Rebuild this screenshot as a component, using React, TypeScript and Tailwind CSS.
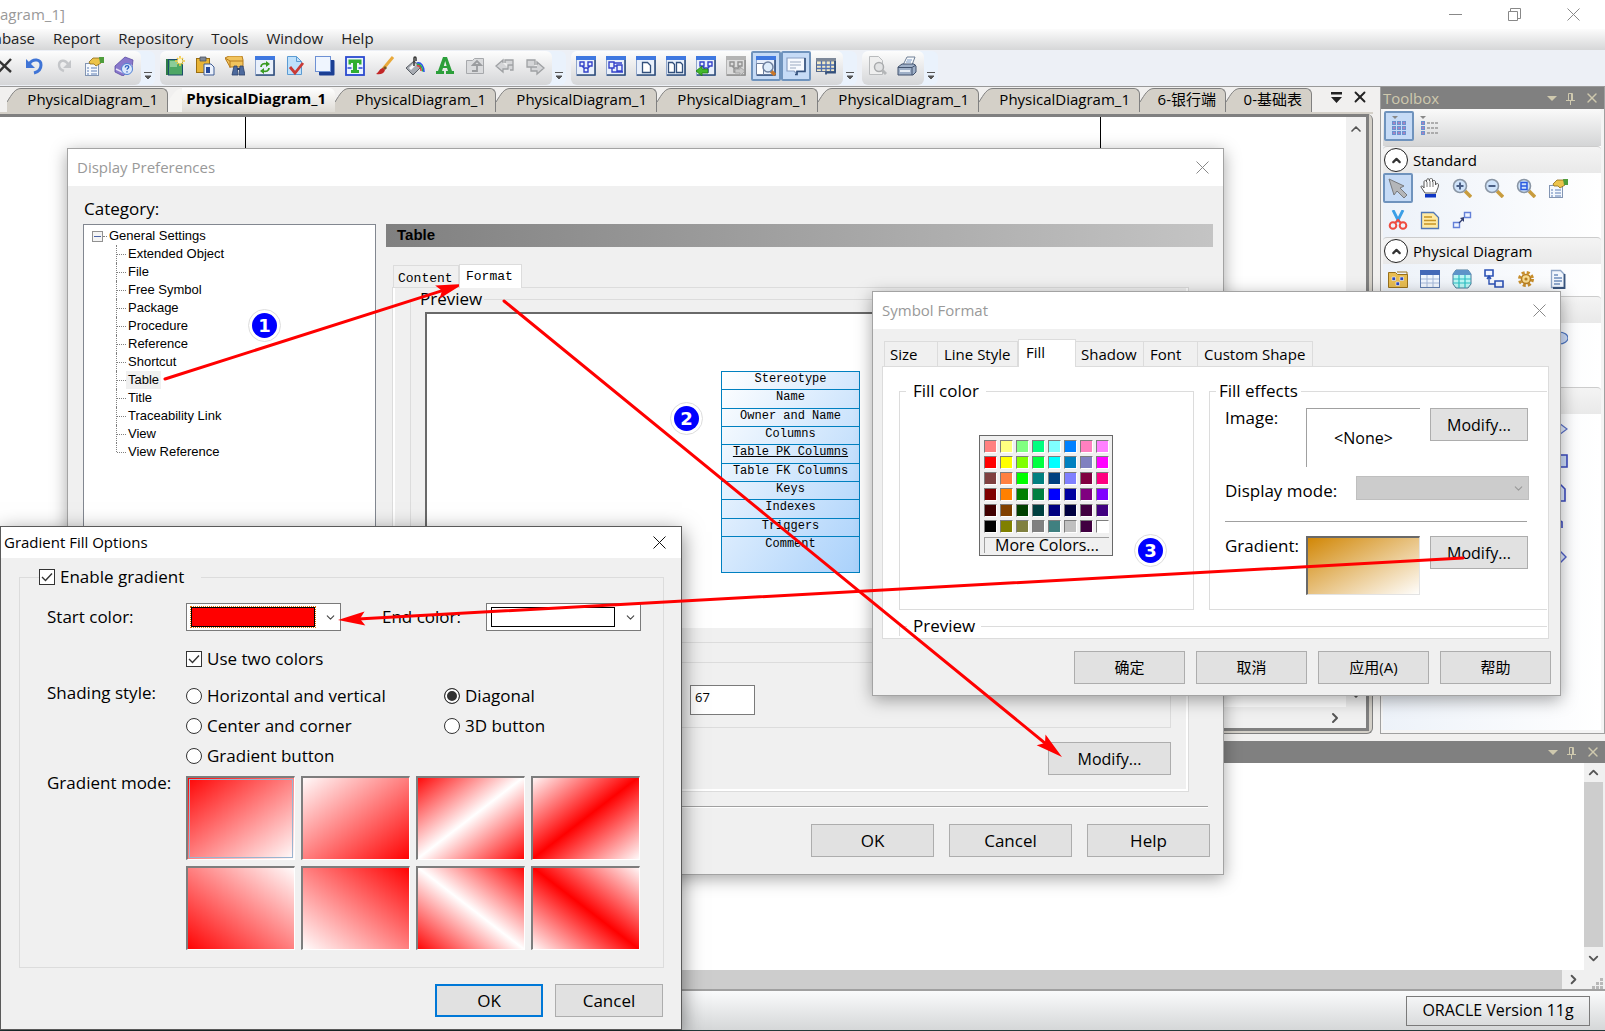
import type { ReactNode } from "react";
import clsx from "clsx";
import { ChevronDown, ChevronRight, ChevronUp, X } from "lucide-react";

const UI = "font-['Open_Sans','Noto_Sans_CJK_SC',sans-serif]";

/* ---------- icons ---------- */

function Svg({ children, size = 20 }: { children: ReactNode; size?: number }) {
  return (
    <svg width={size} height={size} viewBox="0 0 20 20" fill="none" aria-hidden="true" className="shrink-0">
      {children}
    </svg>
  );
}

function WindowFrame({ gray = false }: { gray?: boolean }) {
  return (
    <>
      <rect x="0.5" y="0.5" width="19" height="19" fill={gray ? "#dcdcdc" : "#e9f0fb"} stroke={gray ? "#b4b4b4" : "#8fa5cb"} />
      <path d="M19 4v15.500M1 19h18" stroke={gray ? "#8f8f8f" : "#33507c"} strokeWidth="1.600" />
      <rect x="0" y="0" width="20" height="4" fill={gray ? "#b4b4b4" : "#3f78e0"} />
    </>
  );
}

function Nodes({ color = "#3341c9" }: { color?: string }) {
  return <path d="M4 6h4v4H4zM12 6h4v4h-4zM8 12h4v4H8zM6 10l3 3M14 10l-3 3" stroke={color} strokeWidth="1.4" />;
}

const icons: Record<string, ReactNode> = {
  remove: <path d="M3 3l14 13M17 3L4 17" stroke="#333" strokeWidth="2.4" />,
  undo: (
    <>
      <path d="M5 8c4-6 12-5 12 1 0 4-3 7-7 8" stroke="#3f74d6" strokeWidth="3" />
      <path d="M2 3v9h9z" fill="#3f74d6" />
    </>
  ),
  redo: (
    <>
      <path d="M14 8C11 3 5 4 5 9c0 3 2 5 5 6" stroke="#c4c6c9" strokeWidth="2.4" />
      <path d="M17 4v8H9z" fill="#c4c6c9" />
    </>
  ),
  props: (
    <>
      <rect x="1.5" y="7.5" width="13" height="12" fill="#f4f8fd" stroke="#8295b3" />
      <path d="M3 12h2M7 12h6M3 15h2M7 15h6M3 18h2M7 18h6" stroke="#5f7fb5" />
      <path d="M5 6l4-4h7l1 5-5 3-2-2H6z" fill="#ecc34a" stroke="#8d6a17" strokeWidth="0.8" />
      <path d="M15 1h5v6h-4z" fill="#4f9d3c" />
    </>
  ),
  help: (
    <>
      <path d="M1 10L11 1l8 3-1 8-9 8-8-4z" fill="#8878cc" stroke="#5c4da3" strokeWidth="0.8" />
      <path d="M2 13l8 4 8-8" stroke="#e5e0f7" strokeWidth="1.4" />
      <circle cx="13" cy="13" r="5.5" fill="#dbe8fc" stroke="#4d7fd4" />
      <path d="M11.3 11.5c0-2.6 3.6-2.3 3.4-.2-.2 1-1.600 1.200-1.600 2.500M13 15.300v1.200" stroke="#2b5fc0" strokeWidth="1.3" />
    </>
  ),
  newModel: (
    <>
      <path d="M1 3h3v16H1z" fill="#2f7c46" />
      <rect x="3.500" y="3.500" width="14" height="15.500" fill="#4ea765" stroke="#1c4d6b" />
      <path d="M5 5h7v6H5z" fill="#a5dcae" opacity="0.7" />
      <path d="M15 0v10M10 5h10M12 2l6 6M18 2l-6 6" stroke="#f5c93c" strokeWidth="1.600" />
      <circle cx="15" cy="5" r="2.500" fill="#fff6c4" />
    </>
  ),
  paste: (
    <>
      <rect x="1.500" y="2.500" width="13" height="14" fill="#e8b437" stroke="#9b6e11" />
      <path d="M5 1h6v4H5z" fill="#7e8796" stroke="#4c5462" strokeWidth="0.8" />
      <path d="M9 8h7l3 3v8H9z" fill="#eaf0fb" stroke="#3f5c94" />
      <path d="M11 17v-6h4v6h4z" fill="#24489a" />
    </>
  ),
  find: (
    <>
      <path d="M0 2l4-2h13l1 4v7H5z" fill="#f1c35c" stroke="#b57a1d" />
      <path d="M0 2l5 3v7M5 5h13" stroke="#b57a1d" />
      <path d="M7 19l2-9h3l1 9zM14 19l1-9h3l2 9z" fill="#4d6a9d" stroke="#2b4069" strokeWidth="0.8" />
      <path d="M12 13h3" stroke="#2b4069" strokeWidth="2" />
    </>
  ),
  refresh: (
    <>
      <WindowFrame />
      <path d="M6 11c0-3 3-4 6-3M14 12c0 3-3 4-6 3" stroke="#3a9b22" strokeWidth="1.800" />
      <path d="M11 5l4 3-4 3zM9 12l-4 3 4 3z" fill="#3a9b22" />
    </>
  ),
  check: (
    <>
      <path d="M2.500.5h9l5 5v13h-14z" fill="#bfe0fa" stroke="#5b9bd3" />
      <path d="M11.500.5v5h5" stroke="#5b9bd3" />
      <path d="M5 11l5 6 8-10" stroke="#c93a35" strokeWidth="2.800" />
    </>
  ),
  shadow: (
    <>
      <rect x="4" y="4" width="15.500" height="15.500" rx="1" fill="#1b3f94" />
      <rect x="0.500" y="0.500" width="15" height="15" fill="#eff5fe" stroke="#6d90d4" />
    </>
  ),
  textBox: (
    <>
      <rect x="1" y="1" width="18" height="18" fill="#eaf3ff" stroke="#2a49cf" strokeWidth="1.800" />
      <path d="M3.500 3.500h13v5h-2.500V7h-2v7h2v3H6v-3h2V7H6v1.500H3.500z" fill="#2fae31" />
      <path d="M2.500 12h4M17.500 12h-4" stroke="#2a49cf" strokeWidth="1.400" />
    </>
  ),
  brush: (
    <>
      <path d="M18 1L8 13" stroke="#e9a93a" strokeWidth="3" />
      <path d="M9 11l2 2" stroke="#7a5622" strokeWidth="3" />
      <path d="M8 12c-3 0-4 4-7 6 4 1 8 0 9-4z" fill="#c22626" />
    </>
  ),
  bucket: (
    <>
      <path d="M1 12l8-7 7 6-8 8z" fill="#a7abb2" stroke="#5a5f66" />
      <path d="M4 12l5-5 2 2-5 5z" fill="#f6f7f8" />
      <path d="M9 10V2c0-1.500 2-1.500 2 0v3" stroke="#333" strokeWidth="1.500" />
      <path d="M12 7c4-1 7 3 7 9" stroke="#2b4ff0" strokeWidth="1.600" />
      <path d="M12 8.500c3-1 5.500 2 5.500 7" stroke="#22b04a" strokeWidth="1.400" />
      <path d="M12 10c2-1 4 1.500 4 5" stroke="#e23b3b" strokeWidth="1.400" />
    </>
  ),
  letterA: (
    <path d="M8 1h4l5 14h2v3h-8v-3h2l-1-3H8l-1 3h2v3H1v-3h2zM8.800 10h2.800L10.200 5z" fill="#2c9f3a" />
  ),
  folderUp: (
    <>
      <path d="M1.500 4.500h6l2-2h9v15h-17z" fill="#dadbdd" stroke="#a7a9ac" />
      <path d="M7 15h5V8M8 9l4-4 4 4z" stroke="#9a9c9f" strokeWidth="1.800" />
    </>
  ),
  prev: (
    <path d="M8 7V4l-7 6 7 6v-3h5V9h5v5h-3M10 7V4h8v5" fill="#d5d6d8" stroke="#9fa1a4" strokeWidth="1.300" />
  ),
  next: (
    <path d="M12 9V6l7 6-7 6v-3H6v-4h6M8 11H2V4h8v5" fill="#d5d6d8" stroke="#9fa1a4" strokeWidth="1.300" />
  ),
  winTree: (
    <>
      <WindowFrame />
      <Nodes />
    </>
  ),
  winLinks: (
    <>
      <WindowFrame />
      <path d="M3 6h5v6H3zM11 9h5v6h-5zM8 7h8M6 12v4h11M8 10h3" stroke="#3341c9" strokeWidth="1.400" />
    </>
  ),
  winPage: (
    <>
      <WindowFrame />
      <path d="M6.500 6.500h5l3 3v7h-8z" fill="#fff" stroke="#33507c" strokeWidth="1.300" />
    </>
  ),
  winPages: (
    <>
      <WindowFrame />
      <path d="M2.500 6.500h4l2 2v8h-6zM10.500 6.500h4l2 2v8h-6z" fill="#fff" stroke="#33507c" strokeWidth="1.300" />
    </>
  ),
  winBack: (
    <>
      <WindowFrame />
      <Nodes />
      <path d="M0 15l6-5v3h6v4H6v3z" fill="#43b82a" stroke="#1f7a12" strokeWidth="0.800" />
    </>
  ),
  winForward: (
    <>
      <WindowFrame gray />
      <Nodes color="#909090" />
      <path d="M19 15l-5-4v2H9v4h5v3z" fill="#c9c9c9" stroke="#9a9a9a" strokeWidth="0.800" />
    </>
  ),
  winZoom: (
    <>
      <WindowFrame />
      <path d="M0.500 7.500h7v11h-7z" fill="#fff" stroke="#6d7f9e" />
      <path d="M15 15l4 4" stroke="#c9772a" strokeWidth="3.400" />
      <circle cx="12" cy="11" r="5" fill="#dcebfb" fillOpacity="0.900" stroke="#6d7f9e" strokeWidth="1.500" />
    </>
  ),
  note: (
    <>
      <path d="M1 2h18v13h-8v3l-3-3H1z" fill="#f7faff" stroke="#8aa0c4" strokeWidth="1.200" />
      <path d="M4 6h11M4 9h11M4 12h6" stroke="#9aa9c0" />
      <path d="M19 2v13.500h-8v3H9" stroke="#33507c" strokeWidth="1.600" />
    </>
  ),
  gridView: (
    <>
      <rect x="0.500" y="2.500" width="19" height="13" fill="#f3e9c4" stroke="#56698c" />
      <rect x="0" y="2" width="20" height="3.500" fill="#7d8899" />
      <path d="M1 9h18M1 12.500h18M5.500 5v10M10 5v10M14.500 5v10" stroke="#4f6fae" strokeWidth="1.300" />
      <path d="M19 5v11.500H10v2" stroke="#33507c" strokeWidth="1.800" />
    </>
  ),
  preview: (
    <>
      <path d="M2.500.5h9l4 4v14h-13z" fill="#efefef" stroke="#b9bbbd" />
      <circle cx="12" cy="11" r="4.500" fill="#e2e3e4" stroke="#a9abad" strokeWidth="1.500" />
      <path d="M15 14l4 4" stroke="#b4b6b8" strokeWidth="3" />
    </>
  ),
  printer: (
    <>
      <path d="M6 9l4-8h8l-3 8z" fill="#f8fafc" stroke="#6f7f95" />
      <path d="M10 4h5M9 6h5" stroke="#7d9ac4" />
      <path d="M1 11l4-3h12l2 2v6l-3 3H1z" fill="#9fb0c8" stroke="#42536e" />
      <path d="M1 11.500h14l4-2.500M15 12v7" stroke="#42536e" />
      <path d="M3 15h10" stroke="#e7edf5" strokeWidth="2" />
    </>
  ),
  pointer: (
    <path d="M1 1l15 7-4 2 7 7-3 3-7-7-3 4z" fill="#b4b6b9" stroke="#77797d" />
  ),
  hand: (
    <>
      <path d="M5 15L1 9c0-2 2-1 3 1V4c0-2 2.500-2 2.500 0V3c0-3 3-3 3 0V2c0-2.500 3-2.500 3 0v2c0-2 3-2 3 0v3c1-2 3-2 3 0 0 3-2 5-2.500 8z" fill="#fff" stroke="#555" />
      <path d="M7 4v5M10 3v6M13 4v5" stroke="#777" />
      <path d="M5 16h11v3.500H5z" fill="#0d35c4" />
    </>
  ),
  zoomIn: (
    <>
      <path d="M13 13l6 6" stroke="#c89c3e" strokeWidth="3.600" />
      <circle cx="8" cy="8" r="6.500" fill="#cfe3fa" stroke="#8a96a5" strokeWidth="1.600" />
      <path d="M8 4.500v7M4.500 8h7" stroke="#4a5f85" strokeWidth="2" />
    </>
  ),
  zoomOut: (
    <>
      <path d="M13 13l6 6" stroke="#c89c3e" strokeWidth="3.600" />
      <circle cx="8" cy="8" r="6.500" fill="#cfe3fa" stroke="#8a96a5" strokeWidth="1.600" />
      <path d="M4.500 8h7" stroke="#4a5f85" strokeWidth="2" />
    </>
  ),
  zoomFit: (
    <>
      <path d="M13 13l6 6" stroke="#c89c3e" strokeWidth="3.600" />
      <circle cx="8" cy="8" r="6.500" fill="#cfe3fa" stroke="#8a96a5" strokeWidth="1.600" />
      <path d="M5 4.500h6v7H5zM5 8h6" stroke="#2a5ae0" strokeWidth="1.500" />
    </>
  ),
  cut: (
    <>
      <path d="M5 0l6 12M15 0L9 12" stroke="#3b9fe6" strokeWidth="2.800" />
      <circle cx="5" cy="15.500" r="3.300" stroke="#ef4b3f" strokeWidth="2" />
      <circle cx="15" cy="15.500" r="3.300" stroke="#ef4b3f" strokeWidth="2" />
      <path d="M7 13l3-3 3 3" stroke="#ef4b3f" strokeWidth="2" />
    </>
  ),
  memo: (
    <>
      <path d="M1.500 2.500h12l5 5v11h-17z" fill="#ffeaa3" stroke="#5177b5" strokeWidth="1.300" />
      <path d="M4 7h8M4 10.500h12M4 14h12" stroke="#c69425" strokeWidth="1.600" />
    </>
  ),
  link: (
    <>
      <path d="M12.500 2.500h6v5h-6zM1.500 12.500h6v5h-6z" fill="#eff4ff" stroke="#6380d8" strokeWidth="1.400" />
      <path d="M7 13l4-4" stroke="#333f70" strokeWidth="1.300" />
      <path d="M12 7v5L8 8z" fill="#333f70" />
    </>
  ),
  package: (
    <>
      <path d="M.5 3.500h7l2 2h10v13H.5z" fill="#e8bd52" stroke="#99701b" />
      <path d="M9 3h10v3" stroke="#99701b" />
      <path d="M4 8h3.500v3.500H4zM12 8h3.500v3.500H12zM8 13h3.500v3.500H8z" fill="#2c49c0" stroke="#fff" strokeWidth="0.600" />
    </>
  ),
  table: (
    <>
      <rect x="0.500" y="1.500" width="19" height="17" fill="#f2f7ff" stroke="#6380b3" />
      <path d="M0 1h20v5H0z" fill="#4469b8" />
      <path d="M1 10h18M1 14h18M7 6v12M13 6v12" stroke="#a5b8da" />
    </>
  ),
  view: (
    <>
      <path d="M4 1h12l3 4v10l-3 4H4l-3-4V5z" fill="#bdf7f5" stroke="#4c7a99" />
      <path d="M1 5l3-4h12l3 4v1H1z" fill="#5d94c9" />
      <path d="M1 10h18M1 14h18M7 6v13M13 6v13" stroke="#2cc0c5" strokeWidth="1.200" />
    </>
  ),
  reference: (
    <>
      <path d="M1 1h8v6H1zM11 12h8v6h-8z" fill="#f2f6ff" stroke="#2c52b5" strokeWidth="1.600" />
      <path d="M5 7v8h6M3 10l2-3 2 3" stroke="#2c52b5" strokeWidth="1.400" />
    </>
  ),
  procedure: (
    <>
      <circle cx="10" cy="10" r="6.500" stroke="#c98f2c" strokeWidth="3" strokeDasharray="3 2.100" />
      <circle cx="10" cy="10" r="4.500" fill="#f7dc93" stroke="#b97f21" strokeWidth="1.600" />
      <circle cx="10" cy="10" r="1.600" fill="#b97f21" />
    </>
  ),
  file: (
    <>
      <path d="M3.500 1.500h9l4 4v13h-13z" fill="#f1f6fd" stroke="#8ea5c6" strokeWidth="1.300" />
      <path d="M16.500 5v14H5" stroke="#38547d" strokeWidth="1.800" />
      <path d="M6 6h4M6 9h8M6 12h8M6 15h6" stroke="#6f8fbc" strokeWidth="1.300" />
    </>
  ),
  ellipse: <ellipse cx="11" cy="10" rx="9" ry="6" fill="#cddcf8" stroke="#4f78c4" strokeWidth="1.200" />,
  diamond: <path d="M11 4l8 6-8 6-8-6z" fill="#dfe8fb" stroke="#5a70c8" strokeWidth="1.200" />,
  square: <path d="M2 4h17v12H2z" fill="#cddcf8" stroke="#3b4bc0" strokeWidth="1.600" />,
  page: <path d="M4 2h9l4 4v12H4z" fill="#dfe8fb" stroke="#3b4bc0" strokeWidth="1.600" />,
  arc: <path d="M5 16c0-8 5-12 9-9v6" stroke="#3b4bc0" strokeWidth="1.600" />,
  pentagon: <path d="M3 4h9l6 6-6 6H3z" fill="#dfe8fb" stroke="#4f5fc8" strokeWidth="1.400" />,
};

function Icon({ name }: { name: string }) {
  return <Svg>{icons[name]}</Svg>;
}

/* ---------- main frame ---------- */

const toolGroups = [
  ["remove", "undo", "redo", "props", "help"],
  ["newModel", "paste", "find", "refresh", "check", "shadow", "textBox", "brush", "bucket", "letterA", "folderUp", "prev", "next"],
  ["winTree", "winLinks", "winPage", "winPages", "winBack", "winForward", "winZoom", "note", "gridView"],
  ["preview", "printer"],
];
const pressed = ["winZoom", "note", "pointer"];

function IconButton({ name, className }: { name: string; className?: string }) {
  return (
    <button
      type="button"
      aria-label={name}
      className={clsx(
        "flex items-center justify-center",
        pressed.includes(name) && "rounded-xs border-2 border-[#6f93bd] bg-[#c6dbf6]",
        className
      )}
    >
      <Icon name={name} />
    </button>
  );
}

function TitleBar() {
  return (
    <header className="flex h-[29px] shrink-0 items-center justify-between bg-white text-[#999]">
      <div className="text-[15px] whitespace-nowrap">agram_1]</div>
      <div className="flex items-center gap-[46px] pr-[25px]">
        <button type="button" aria-label="Minimize">
          <svg width="13" height="13" viewBox="0 0 13 13"><path d="M0 6.500h13" stroke="#888" /></svg>
        </button>
        <button type="button" aria-label="Restore">
          <svg width="13" height="13" viewBox="0 0 13 13" fill="none" stroke="#888"><path d="M.5 3.500h9v9h-9zM2.500 3V.5h10v10H10" /></svg>
        </button>
        <button type="button" aria-label="Close">
          <svg width="13" height="13" viewBox="0 0 13 13" stroke="#888"><path d="M.5.5l12 12M12.500.5l-12 12" /></svg>
        </button>
      </div>
    </header>
  );
}

function MenuBar() {
  return (
    <nav className="flex h-[21px] shrink-0 items-start gap-[18px] bg-linear-to-b from-[#fcfcfc] to-[#d6d7d8] text-[15px] leading-[19px] text-[#222]">
      <button type="button" className="flex w-[35px] justify-end overflow-hidden">abase</button>
      {["Report", "Repository", "Tools", "Window", "Help"].map((item) => (
        <button key={item} type="button">{item}</button>
      ))}
    </nav>
  );
}

function ToolBar() {
  return (
    <div className="flex h-9 shrink-0 gap-[5px] overflow-hidden bg-[#edf0f6] py-px">
      {toolGroups.map((group, i) => (
        <div key={group[0]} className={clsx("flex rounded-md bg-[#eaf2fc]", i === 0 && "-ml-[11px]")}>
          <div className="flex rounded-md bg-linear-to-b from-[#fdfdfd] to-[#d5d6d8] pr-[2px] pb-1">
            {group.map((name) => (
              <IconButton key={name} name={name} className="w-[30px] pr-px" />
            ))}
          </div>
          <button type="button" aria-label="Toolbar options" className="flex w-[14px] items-end justify-center pb-[5px]">
            <svg width="8" height="8" viewBox="0 0 8 8"><path d="M0 .5h8M1 4h6L4 7z" stroke="#555" fill="#555" /></svg>
          </button>
        </div>
      ))}
    </div>
  );
}

const docTabs = [
  { id: 1, label: "PhysicalDiagram_1", width: "w-[161px]" },
  { id: 2, label: "PhysicalDiagram_1", width: "w-[167px]", active: true },
  { id: 3, label: "PhysicalDiagram_1", width: "w-[161px]" },
  { id: 4, label: "PhysicalDiagram_1", width: "w-[161px]" },
  { id: 5, label: "PhysicalDiagram_1", width: "w-[161px]" },
  { id: 6, label: "PhysicalDiagram_1", width: "w-[161px]" },
  { id: 7, label: "PhysicalDiagram_1", width: "w-[161px]" },
  { id: 8, label: "6-银行端", width: "w-[86px]" },
  { id: 9, label: "0-基础表", width: "w-[86px]" },
];

function DocTabs() {
  return (
    <div className="flex h-[27px] shrink-0 items-start border-b-2 border-[#d4d0c8] bg-[#f1f0ef] pl-[7px]">
      {docTabs.map((tab) => (
        <button
          key={tab.id}
          type="button"
          className={clsx("mt-px flex h-6 shrink-0 text-[15px] leading-5", tab.width)}
        >
          <svg width="14" height="24" viewBox="0 0 14 24" className="shrink-0">
            <path d="M0 24V14C5 6 8 .5 14 .5V24z" fill={tab.active ? "#f6f5f3" : "#d4d0c8"} />
            {!tab.active && <path d="M0 14C5 6 8 .5 14 .5" stroke="#808080" fill="none" />}
          </svg>
          <span
            className={clsx(
              "flex h-full flex-1 justify-end rounded-tr-md pr-[9px] whitespace-nowrap",
              tab.active
                ? "bg-linear-to-b from-white to-[#dedbd5] font-bold"
                : "border-t border-r border-[#808080] bg-[#d4d0c8]"
            )}
          >
            {tab.label}
          </span>
        </button>
      ))}
      <div className="ml-auto flex items-center gap-[9px] pt-px pr-1 text-[#222]">
        <button type="button" aria-label="Tab list">
          <svg width="11" height="11" viewBox="0 0 11 11"><path d="M0 0h11v2.500H0zM0 5h11L5.500 11z" fill="#222" /></svg>
        </button>
        <button type="button" aria-label="Close tab"><X size={18} strokeWidth={2.500} /></button>
      </div>
    </div>
  );
}

function PaneHeader({ title }: { title?: string }) {
  return (
    <div className="flex h-[22px] shrink-0 items-center justify-between bg-[#808080] pr-1 pl-[2px] text-[15px] leading-5 text-[#cfc9ae]">
      <span>{title}</span>
      <div className="flex items-center gap-[9px]">
        <button type="button" aria-label="Pane menu">
          <svg width="10" height="5" viewBox="0 0 10 5"><path d="M0 0h10L5 5z" fill="#cfc9ae" /></svg>
        </button>
        <button type="button" aria-label="Pin pane">
          <svg width="9" height="13" viewBox="0 0 9 13" fill="none" stroke="#cfc9ae"><path d="M2.500 8V1.500h4V8M5.500 2v6M0 8.500h9M4.500 9v4" /></svg>
        </button>
        <button type="button" aria-label="Close pane"><X size={16} /></button>
      </div>
    </div>
  );
}

function ToolboxSection({ title, children }: { title: string; children: ReactNode }) {
  return (
    <section>
      <h2 className="flex h-[27px] items-center gap-[5px] rounded-t-sm border-t border-[#ccc] bg-linear-to-b from-[#f4f4f4] to-[#e9e9e9] pl-px text-[15px]">
        <span className="flex size-6 items-center justify-center rounded-full border border-[#222] bg-white">
          <ChevronUp size={13} strokeWidth={4} color="#333" />
        </span>
        {title}
      </h2>
      <div className="grid auto-rows-[32px] grid-cols-[repeat(6,32px)]">{children}</div>
    </section>
  );
}

function Toolbox() {
  return (
    <aside className="flex w-[225px] shrink-0 flex-col border-r border-b border-l border-[#a0a0a0] bg-[#f4f4f4]">
      <PaneHeader title="Toolbox" />
      <div className="mr-[3px] mb-[3px] ml-[2px] flex flex-1 flex-col bg-linear-to-r from-[#edf2f9] to-white">
        <div className="flex h-[37px] bg-linear-to-b from-[#fafafa] to-[#d4d5d6] py-[2px] pl-px">
          <button type="button" aria-label="Icon view" className="flex h-[30px] w-[30px] items-center justify-center rounded-xs border-2 border-[#6f93bd] bg-[#c6dbf6]">
            <Svg>
              <path d="M3 0h6L6 3z" fill="#888" />
              <path d="M3 5h4v4H3zM8 5h4v4H8zM13 5h4v4h-4zM3 10h4v4H3zM8 10h4v4H8zM13 10h4v4h-4zM3 15h4v4H3zM8 15h4v4H8zM13 15h4v4h-4z" fill="#6a92d0" />
              <path d="M4 6h2v2H4zM9 6h2v2H9zM14 6h2v2h-2zM4 11h2v2H4zM9 11h2v2H9zM14 11h2v2h-2zM4 16h2v2H4zM9 16h2v2H9zM14 16h2v2h-2z" fill="#a884bd" />
            </Svg>
          </button>
          <button type="button" aria-label="List view" className="flex h-[30px] w-[30px] items-center justify-center">
            <Svg>
              <path d="M1 0h6L4 3z" fill="#888" />
              <path d="M2 5h4v4H2zM2 10h4v4H2zM2 15h4v4H2z" fill="#6a92d0" />
              <path d="M3 6h2v2H3zM3 11h2v2H3zM3 16h2v2H3z" fill="#a884bd" />
              <path d="M8 7h11M8 12h11M8 17h11" stroke="#999" strokeWidth="1.500" strokeDasharray="3 1" />
            </Svg>
          </button>
        </div>
        <ToolboxSection title="Standard">
          {["pointer", "hand", "zoomIn", "zoomOut", "zoomFit", "props", "cut", "memo", "link"].map((n) => (
            <IconButton key={n} name={n} className="h-[30px] w-[30px]" />
          ))}
        </ToolboxSection>
        <ToolboxSection title="Physical Diagram">
          {["package", "table", "view", "reference", "procedure", "file"].map((n) => (
            <IconButton key={n} name={n} className="h-[30px] w-[30px]" />
          ))}
        </ToolboxSection>
        <ToolboxSection title="">
          <IconButton name="ellipse" className="col-start-6 h-[30px] w-[30px]" />
          <span className="col-start-6" />
        </ToolboxSection>
        <ToolboxSection title="">
          {["diamond", "square", "page", "arc", "pentagon"].map((n) => (
            <IconButton key={n} name={n} className="col-start-6 h-[30px] w-[30px]" />
          ))}
        </ToolboxSection>
      </div>
    </aside>
  );
}

function Workspace() {
  return (
    <div className="flex min-h-0 flex-1 border-t border-[#999] bg-[#f1f0ef] pb-[7px]">
      <main className="mr-[7px] flex min-w-0 flex-1 flex-col">
        <DocTabs />
        <div className="flex flex-1 rounded-r-md border-r border-b border-[#808080] bg-[#d4d0c8] pr-[3px] pb-[2px]">
          <div className="flex flex-1 flex-col border-t-3 border-r-3 border-b-3 border-[#808080] bg-white">
            <div className="flex flex-1">
              <div className="flex flex-1 items-start pl-[245px]">
                <div className="h-24 w-[856px] border-x border-black" />
              </div>
              <div className="flex w-5 flex-col items-center justify-between bg-[#f0f0f0] py-1">
                <ChevronUp size={16} strokeWidth={2.500} color="#555" />
                <ChevronDown size={16} strokeWidth={2.500} color="#555" />
              </div>
            </div>
            <div className="flex h-[21px] items-center justify-end bg-[#f0f0f0] pr-[23px]">
              <ChevronRight size={16} strokeWidth={3} color="#555" />
            </div>
          </div>
        </div>
      </main>
      <Toolbox />
    </div>
  );
}

function OutputPane() {
  return (
    <section className="shrink-0 border-b-2 border-[#a0a0a0] bg-[#f0f0f0]">
      <PaneHeader />
      <div className="flex h-[207px] pr-[2px]">
        <div className="flex-1 bg-white" />
        <div className="flex w-[19px] flex-col items-center">
          <ChevronUp size={15} strokeWidth={3} color="#555" className="my-[2px]" />
          <div className="w-full flex-1 bg-[#cdcdcd]" />
          <ChevronDown size={15} strokeWidth={3} color="#555" className="my-1" />
        </div>
      </div>
      <div className="flex h-[19px] items-center">
        <div className="h-full flex-1 bg-[#cdcdcd]" />
        <ChevronRight size={15} strokeWidth={3} color="#555" className="mx-[4px]" />
        <svg width="20" height="19" viewBox="0 0 20 19" fill="#b8b8b8">
          <path d="M15 8h3v3h-3zM11 12h3v3h-3zM15 12h3v3h-3zM7 16h3v3H7zM11 16h3v3h-3zM15 16h3v3h-3z" />
        </svg>
      </div>
    </section>
  );
}

/* ---------- dialog parts ---------- */

function Dialog({
  title,
  active = false,
  className,
  titleClass,
  children,
}: {
  title: string;
  active?: boolean;
  className: string;
  titleClass: string;
  children: ReactNode;
}) {
  return (
    <section
      role="dialog"
      aria-label={title}
      className={clsx(
        "absolute border bg-[#f0f0f0] text-[17px] leading-5 text-black",
        active ? "border-[#5a5a5a] shadow-[0_6px_20px_rgba(0,0,0,0.5)]" : "border-[#a3a3a3] shadow-[0_4px_16px_rgba(0,0,0,0.35)]",
        className
      )}
    >
      <div className={clsx("flex items-center justify-between bg-white pb-px text-[15px]", !active && "text-[#999]", titleClass)}>
        <span>{title}</span>
        <button type="button" aria-label="Close">
          <svg width="13" height="13" viewBox="0 0 13 13" stroke={active ? "#111" : "#888"}>
            <path d="M.5.5l12 12M12.500.5l-12 12" />
          </svg>
        </button>
      </div>
      {children}
    </section>
  );
}

function PushButton({ children, className, primary }: { children: ReactNode; className: string; primary?: boolean }) {
  return (
    <button
      type="button"
      className={clsx("h-[33px] bg-[#e1e1e1]", primary ? "border-2 border-[#0078d7]" : "border border-[#adadad]", className)}
    >
      {children}
    </button>
  );
}

function Tab({ label, active, className }: { label: string; active?: boolean; className: string }) {
  return (
    <button
      type="button"
      role="tab"
      aria-selected={!!active}
      className={clsx("border-t border-r border-[#dcdcdc] text-left whitespace-nowrap", active && "relative z-10 -mb-px border-l bg-white", className)}
    >
      {label}
    </button>
  );
}

/* ---------- display preferences ---------- */

const categories = [
  "Extended Object", "File", "Free Symbol", "Package", "Procedure", "Reference",
  "Shortcut", "Table", "Title", "Traceability Link", "View", "View Reference",
];

const symbolRows = [
  "Stereotype", "Name", "Owner and Name", "Columns", "Table PK Columns",
  "Table FK Columns", "Keys", "Indexes", "Triggers", "Comment",
];

function CategoryTree() {
  return (
    <div className="w-[293px] shrink-0 border border-[#828790] bg-white pt-[2px] pl-2 font-['Liberation_Sans',sans-serif] text-[13px] leading-[18px]">
      <div className="flex items-center">
        <span className="flex size-[11px] items-center justify-center border border-[#919191] bg-[#f4f4f4]">
          <span className="h-px w-[7px] bg-[#4b63a7]" />
        </span>
        <span className="mr-[2px] w-1 border-t border-dotted border-[#808080]" />
        General Settings
      </div>
      <ul className="ml-6">
        {categories.map((c, i) => (
          <li key={c} className="flex items-center">
            <span className={clsx("self-start border-l border-dotted border-[#808080]", i === categories.length - 1 ? "h-[9px]" : "h-[18px]")} />
            <span className="w-[9px] border-t border-dotted border-[#808080]" />
            <span className={clsx("px-[2px]", c === "Table" && "bg-[#f0f0f0]")}>{c}</span>
          </li>
        ))}
      </ul>
    </div>
  );
}

function DisplayPreferences() {
  return (
    <Dialog title="Display Preferences" className="top-[148px] left-[67px] w-[1157px]" titleClass="h-[37px] pr-[14px] pl-[9px]">
      <div className="pt-[13px] pr-[10px] pb-[17px] pl-[15px]">
        <div className="h-[25px] pl-px">Category:</div>
        <div className="flex gap-[10px]">
          <CategoryTree />
          <div className="min-w-0 flex-1">
            <div className="h-[23px] bg-linear-to-r/srgb from-[#808080] to-[#c4c4c4] pl-[11px] font-['Liberation_Sans',sans-serif] text-[15px] leading-[22px] font-bold">
              Table
            </div>
            <div role="tablist" className="mt-[17px] ml-[7px] flex items-end font-['Liberation_Mono',monospace] text-[13px]">
              <Tab label="Content" className="h-[22px] w-[66px] border-l pt-[3px] pl-1" />
              <Tab label="Format" active className="h-6 w-[63px] pl-[6px] leading-[22px]" />
            </div>
            <div className="mr-6 ml-[6px] border border-[#dcdcdc]">
              <div className="border-2 border-t-0 border-white pr-[15px] pb-[14px] pl-[15px]">
                <fieldset className="border border-[#dcdcdc] px-[14px] pt-[2px] pb-[14px]">
                  <legend className="-ml-[7px] px-[2px] leading-[22px]">Preview</legend>
                  <div className="flex h-[316px] justify-center border-2 border-[#696969] border-r-white border-b-white bg-white pt-[57px]">
                    <div className="h-[202px] w-[139px] border border-[#0080c0] bg-linear-to-br/srgb from-white to-[#a9d1fb] font-['Liberation_Mono',monospace] text-[12px] leading-[14px]">
                      {symbolRows.map((row, i) => (
                        <div
                          key={row}
                          className={clsx(
                            "text-center",
                            i % 3 === 1 ? "h-[19px]" : "h-[18px]",
                            i < 9 && "border-b border-[#0080c0]",
                            row === "Table PK Columns" && "underline"
                          )}
                        >
                          {row}
                        </div>
                      ))}
                    </div>
                  </div>
                </fieldset>
                <fieldset className="mt-[19px] border border-[#dcdcdc] pt-[22px] pb-3 pl-[279px]">
                  <input
                    aria-label="Width"
                    defaultValue="67"
                    className="block h-[30px] w-[65px] border border-[#7a7a7a] bg-white px-1 pb-[7px] font-['Open_Sans',sans-serif] text-[13px]"
                  />
                </fieldset>
                <div className="mt-[14px] flex justify-end text-[16px]">
                  <PushButton className="w-[123px]">Modify...</PushButton>
                </div>
              </div>
            </div>
          </div>
        </div>
        <div className="mt-[14px] mr-[5px] h-[2px] border-b border-white bg-[#a0a0a0]" />
        <div className="mt-4 mr-[3px] flex justify-end gap-[15px]">
          <PushButton className="w-[123px]">OK</PushButton>
          <PushButton className="w-[123px]">Cancel</PushButton>
          <PushButton className="w-[123px]">Help</PushButton>
        </div>
      </div>
    </Dialog>
  );
}

/* ---------- symbol format ---------- */

const palette = [
  "bg-[#ff8080]", "bg-[#ffff80]", "bg-[#80ff80]", "bg-[#00ff80]", "bg-[#80ffff]", "bg-[#0080ff]", "bg-[#ff80c0]", "bg-[#ff80ff]",
  "bg-[#ff0000]", "bg-[#ffff00]", "bg-[#80ff00]", "bg-[#00ff40]", "bg-[#00ffff]", "bg-[#0080c0]", "bg-[#8080c0]", "bg-[#ff00ff]",
  "bg-[#804040]", "bg-[#ff8040]", "bg-[#00ff00]", "bg-[#008080]", "bg-[#004080]", "bg-[#8080ff]", "bg-[#800040]", "bg-[#ff0080]",
  "bg-[#800000]", "bg-[#ff8000]", "bg-[#008000]", "bg-[#008040]", "bg-[#0000ff]", "bg-[#0000a0]", "bg-[#800080]", "bg-[#8000ff]",
  "bg-[#400000]", "bg-[#804000]", "bg-[#004000]", "bg-[#004040]", "bg-[#000080]", "bg-[#000040]", "bg-[#400040]", "bg-[#400080]",
  "bg-[#000000]", "bg-[#808000]", "bg-[#808040]", "bg-[#808080]", "bg-[#408080]", "bg-[#c0c0c0]", "bg-[#400040]", "bg-[#ffffff]",
];

function ColorPalette() {
  return (
    <div className="w-[134px] border border-[#696969] bg-[#f0f0f0] pt-1 pr-[3px] pb-[2px] pl-1">
      <div className="grid grid-cols-[repeat(8,13px)] gap-[3px]">
        {palette.map((color, i) => (
          <button
            key={i}
            type="button"
            aria-label={`Color ${i + 1}`}
            className={clsx("size-[13px] border border-t-[#7d7d7d] border-r-white border-b-white border-l-[#7d7d7d]", color)}
          />
        ))}
      </div>
      <button type="button" className="mt-1 block h-4 w-[125px] border-t border-l border-[#a0a0a0] text-[16px] leading-[15px]">
        More Colors...
      </button>
    </div>
  );
}

function SymbolFormat() {
  return (
    <Dialog title="Symbol Format" className="top-[291px] left-[872px] w-[689px]" titleClass="h-[37px] pr-[14px] pl-[9px]">
      <div className="pt-[10px] pr-[11px] pb-[11px] pl-[9px]">
        <div role="tablist" className="ml-[2px] flex items-end text-[15px]">
          <Tab label="Size" className="h-[25px] w-[54px] border-l pl-[5px]" />
          <Tab label="Line Style" className="h-[25px] w-[80px] pl-[6px]" />
          <Tab label="Fill" active className="h-7 w-[58px] pb-1 pl-[7px]" />
          <Tab label="Shadow" className="h-[25px] w-[68px] pl-[5px]" />
          <Tab label="Font" className="h-[25px] w-[54px] pl-[6px]" />
          <Tab label="Custom Shape" className="h-[25px] w-[115px] pl-[6px]" />
        </div>
        <div className="border border-[#dcdcdc] bg-white pt-[14px] pr-px pb-[2px] pl-4">
          <div className="flex gap-[15px]">
            <fieldset className="w-[295px] border border-[#dcdcdc] pl-[79px]">
              <legend className="-ml-[73px] px-[7px]">Fill color</legend>
              <div className="pt-[34px]"><ColorPalette /></div>
            </fieldset>
            <fieldset className="flex-1 border border-r-0 border-[#dcdcdc] pt-[7px] pb-[14px] pl-[15px]">
              <legend className="-ml-[9px] px-[3px]">Fill effects</legend>
              <div className="flex items-start">
                <span className="w-[81px]">Image:</span>
                <span className="flex h-[59px] w-[114px] items-center justify-center border-t border-l border-[#a0a0a0] text-[16px]">&lt;None&gt;</span>
                <PushButton className="ml-[10px] w-[98px] text-[16px]">Modify...</PushButton>
              </div>
              <div className="mt-[9px] flex h-6 items-center">
                <label htmlFor="display-mode" className="w-[131px] pt-[5px]">Display mode:</label>
                <span className="relative">
                  <select id="display-mode" disabled className="block h-6 w-[173px] appearance-none border border-[#bfbfbf] bg-[#ccc] opacity-100" />
                  <ChevronDown size={13} strokeWidth={2} color="#999" className="absolute top-[6px] right-1" />
                </span>
              </div>
              <div className="mt-[21px] mr-5 border-t border-[#a0a0a0]" />
              <div className="mt-[14px] flex items-start">
                <span className="w-[81px]">Gradient:</span>
                <span className="h-[59px] w-[114px] border-t-2 border-r border-b border-l-2 border-t-[#696969] border-r-[#e3e3e3] border-b-[#e3e3e3] border-l-[#696969] bg-linear-to-br/srgb from-[#d08400] to-white bg-origin-border" />
                <PushButton className="ml-[10px] w-[98px] text-[16px]">Modify...</PushButton>
              </div>
            </fieldset>
          </div>
          <fieldset className="mt-[6px] h-5 border border-r-0 border-b-0 border-[#dcdcdc]">
            <legend className="ml-[7px] px-[6px]">Preview</legend>
          </fieldset>
        </div>
        <div className="mt-3 -mr-[2px] flex justify-end gap-[11px] text-[15px]">
          <PushButton className="w-[111px] pb-px">确定</PushButton>
          <PushButton className="w-[111px] pb-px">取消</PushButton>
          <PushButton className="w-[111px] pb-px">应用(A)</PushButton>
          <PushButton className="w-[111px] pb-px">帮助</PushButton>
        </div>
      </div>
    </Dialog>
  );
}

/* ---------- gradient fill options ---------- */

const gradientModes = [
  "bg-linear-to-br/srgb from-[#ff0000] to-white",
  "bg-linear-to-br/srgb from-white to-[#ff0000]",
  "bg-linear-to-br/srgb from-[#ff0000] via-white to-[#ff0000]",
  "bg-linear-to-br/srgb from-white via-[#ff0000] to-white",
  "bg-linear-to-tr/srgb from-[#ff0000] to-white",
  "bg-linear-to-tr/srgb from-white to-[#ff0000]",
  "bg-linear-to-tr/srgb from-[#ff0000] via-white to-[#ff0000]",
  "bg-linear-to-tr/srgb from-white via-[#ff0000] to-white",
];

function CheckBox({ label }: { label: string }) {
  return (
    <label className="flex items-center gap-[5px]">
      <span className="relative size-4">
        <input type="checkbox" defaultChecked className="block size-4 appearance-none border border-[#333] bg-white" />
        <svg width="16" height="16" viewBox="0 0 16 16" fill="none" className="pointer-events-none absolute inset-0">
          <path d="M3 8l3.500 3.500L13 4.500" stroke="#333" strokeWidth="1.400" />
        </svg>
      </span>
      {label}
    </label>
  );
}

function Radio({ label, checked }: { label: string; checked?: boolean }) {
  return (
    <label className="flex h-[30px] items-center gap-[5px]">
      <input
        type="radio"
        name="shading"
        defaultChecked={checked}
        className="size-4 appearance-none rounded-full border border-[#333] bg-white checked:bg-[#333] checked:shadow-[inset_0_0_0_2px_#fff]"
      />
      {label}
    </label>
  );
}

function ColorSelect({ id, swatch }: { id: string; swatch: string }) {
  return (
    <span className="relative">
      <select id={id} className="block h-7 w-[155px] appearance-none border border-[#7a7a7a] bg-white" />
      <span className={clsx("pointer-events-none absolute inset-y-1 left-[5px] w-[124px] border border-black", swatch)} />
      <ChevronDown size={13} strokeWidth={2} color="#444" className="pointer-events-none absolute top-2 right-1" />
    </span>
  );
}

function GradientFillOptions() {
  return (
    <Dialog active title="Gradient Fill Options" className="top-[526px] left-0 w-[682px]" titleClass="h-[31px] pr-[15px] pl-[3px]">
      <div className="pt-[9px] pr-[17px] pb-3 pl-[18px]">
        <fieldset className="border border-[#dcdcdc] pb-[17px] pl-[27px]">
          <legend className="-ml-2 pr-[17px]"><CheckBox label="Enable gradient" /></legend>
          <div className="mt-4 flex items-center">
            <label htmlFor="start-color" className="w-[139px]">Start color:</label>
            <ColorSelect id="start-color" swatch="bg-[#ff0000] outline-1 outline-dotted outline-[#e07000]" />
            <label htmlFor="end-color" className="ml-[41px] w-[104px]">End color:</label>
            <ColorSelect id="end-color" swatch="bg-white" />
          </div>
          <div className="mt-[13px] ml-[139px] flex h-[30px] items-center">
            <CheckBox label="Use two colors" />
          </div>
          <div className="mt-[7px] flex">
            <span className="w-[139px] pt-[2px]">Shading style:</span>
            <div className="w-[258px]">
              <Radio label="Horizontal and vertical" />
              <Radio label="Center and corner" />
              <Radio label="Gradient button" />
            </div>
            <div>
              <Radio label="Diagonal" checked />
              <Radio label="3D button" />
            </div>
          </div>
          <div className="mt-[5px] flex items-start">
            <span className="-mt-[3px] w-[139px]">Gradient mode:</span>
            <div className="grid grid-cols-[repeat(4,109px)] gap-[6px]">
              {gradientModes.map((mode, i) => (
                <button
                  key={mode}
                  type="button"
                  aria-label={`Gradient mode ${i + 1}`}
                  className={clsx("h-[84px] border-t-2 border-r border-b border-l-2 border-t-[#7d7d7d] border-r-white border-b-white border-l-[#7d7d7d] bg-origin-border p-px", mode)}
                >
                  {i === 0 && <span className="block h-full border border-[#9ab4d0]" />}
                </button>
              ))}
            </div>
          </div>
        </fieldset>
        <div className="mt-4 mr-px flex justify-end gap-3">
          <PushButton primary className="w-[108px]">OK</PushButton>
          <PushButton className="w-[108px]">Cancel</PushButton>
        </div>
      </div>
    </Dialog>
  );
}

/* ---------- annotations ---------- */

const arrows = [
  { from: [165, 379], to: [463, 284] },
  { from: [504, 301], to: [1062, 757] },
  { from: [1463, 558], to: [338, 620] },
];

function Arrows() {
  return (
    <svg width="1605" height="1031" viewBox="0 0 1605 1031" aria-hidden="true" className="pointer-events-none absolute top-0 left-0">
      {arrows.map(({ from, to }) => {
        const angle = (Math.atan2(to[1] - from[1], to[0] - from[0]) * 180) / Math.PI;
        const length = Math.hypot(to[0] - from[0], to[1] - from[1]);
        return (
          <g key={from[0]} transform={`translate(${to[0]} ${to[1]}) rotate(${angle})`}>
            <path d={`M${-length} 0H-20`} stroke="#ff0000" strokeWidth="3" strokeLinecap="round" />
            <path d="M0 0L-27 -7L-22 0L-27 7z" fill="#ff0000" />
          </g>
        );
      })}
    </svg>
  );
}

function Badge({ n, className }: { n: number; className: string }) {
  return (
    <span className={clsx("absolute flex size-[33px] items-center justify-center rounded-full border border-[#ddd] bg-white", className)}>
      <span className="flex size-[25px] items-center justify-center rounded-full bg-[#0000ff] font-['DejaVu_Sans',sans-serif] text-[18px] leading-none font-bold text-white">
        {n}
      </span>
    </span>
  );
}

export default function App() {
  return (
    <div className={clsx("relative flex min-h-screen w-full flex-col overflow-hidden bg-[#f1f0ef] text-black", UI)}>
      <TitleBar />
      <MenuBar />
      <ToolBar />
      <Workspace />
      <OutputPane />
      <footer className="flex h-10 shrink-0 items-center justify-end border-b border-[#223a3a] bg-linear-to-b from-[#fafbfc] to-[#d5d7d8] pr-[15px]">
        <div className="flex h-[30px] w-[184px] items-center justify-center border border-[#7a7a7a] pb-px text-[16px]">ORACLE Version 11g</div>
      </footer>

      <DisplayPreferences />
      <SymbolFormat />
      <GradientFillOptions />

      <Arrows />
      <Badge n={1} className="top-[309px] left-[248px]" />
      <Badge n={2} className="top-[402px] left-[670px]" />
      <Badge n={3} className="top-[534px] left-[1134px]" />
    </div>
  );
}
